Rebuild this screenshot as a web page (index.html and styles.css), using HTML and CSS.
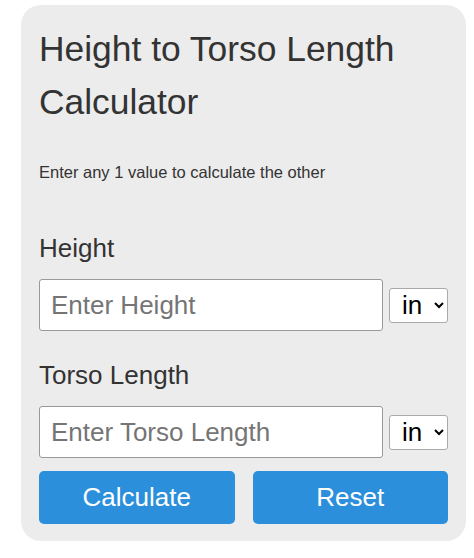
FILE: index.html
```html
<!DOCTYPE html>
<html>
<head>
    <meta charset="utf-8">
    <link rel="stylesheet" href="styles.css">
</head>
<body>

    <div class="calc">
        <h1>Height to Torso Length Calculator</h1>
        <p class="intro">Enter any 1 value to calculate the other</p>

        <div class="field first">
            <label for="height">Height</label>
            <div class="row">
                <input type="text" id="height" placeholder="Enter Height">
                <select id="height-unit">
                    <option>in</option>
                    <option>cm</option>
                </select>
            </div>
        </div>

        <div class="field">
            <label for="torso">Torso Length</label>
            <div class="row">
                <input type="text" id="torso" placeholder="Enter Torso Length">
                <select id="torso-unit">
                    <option>in</option>
                    <option>cm</option>
                </select>
            </div>
        </div>

        <div class="actions">
            <button type="button">Calculate</button>
            <button type="button">Reset</button>
        </div>
    </div>

</body>
</html>
```

FILE: styles.css
```css
body { margin: 0; background: #fff; font-family: "Liberation Sans", Arial, sans-serif; color: #333; }

.calc {
    box-sizing: border-box;
    width: 445px;
    margin: 5px 0 0 21px;
    padding: 18px 18px 17px;
    background: #ececec;
    border-radius: 20px;
}

h1 { margin: 0; font-size: 35.4px; font-weight: normal; line-height: 53px; color: #333; }
.intro { margin: 33px 0 0; font-size: 16.5px; line-height: 20px; color: #333; }

.field { margin-top: 29px; }
.field.first { margin-top: 51px; }
.field label { display: block; font-size: 26px; line-height: 30px; color: #333; }

.row { display: flex; align-items: center; gap: 6px; margin-top: 16px; }
.row input {
    flex: 1;
    min-width: 0;
    box-sizing: border-box;
    height: 52px;
    padding: 0 11px;
    border: 1px solid #999;
    border-radius: 3px;
    background: #fff;
    font-family: inherit;
    font-size: 26px;
    color: #333;
}
.row input::placeholder { color: #757575; }
.row select {
    box-sizing: border-box;
    width: 59px;
    height: 35px;
    padding: 0 0 0 8px;
    font-family: inherit;
    font-size: 26px;
    color: #000;
    background: #fff;
    border: 1px solid #aaa;
    border-radius: 3px;
}

.actions { display: grid; grid-template-columns: 1fr 1fr; gap: 18px; margin-top: 13px; }
.actions button {
    height: 53px;
    border: 0;
    border-radius: 5px;
    background: #2b8fdb;
    color: #fff;
    font-family: inherit;
    font-size: 26px;
}
```
